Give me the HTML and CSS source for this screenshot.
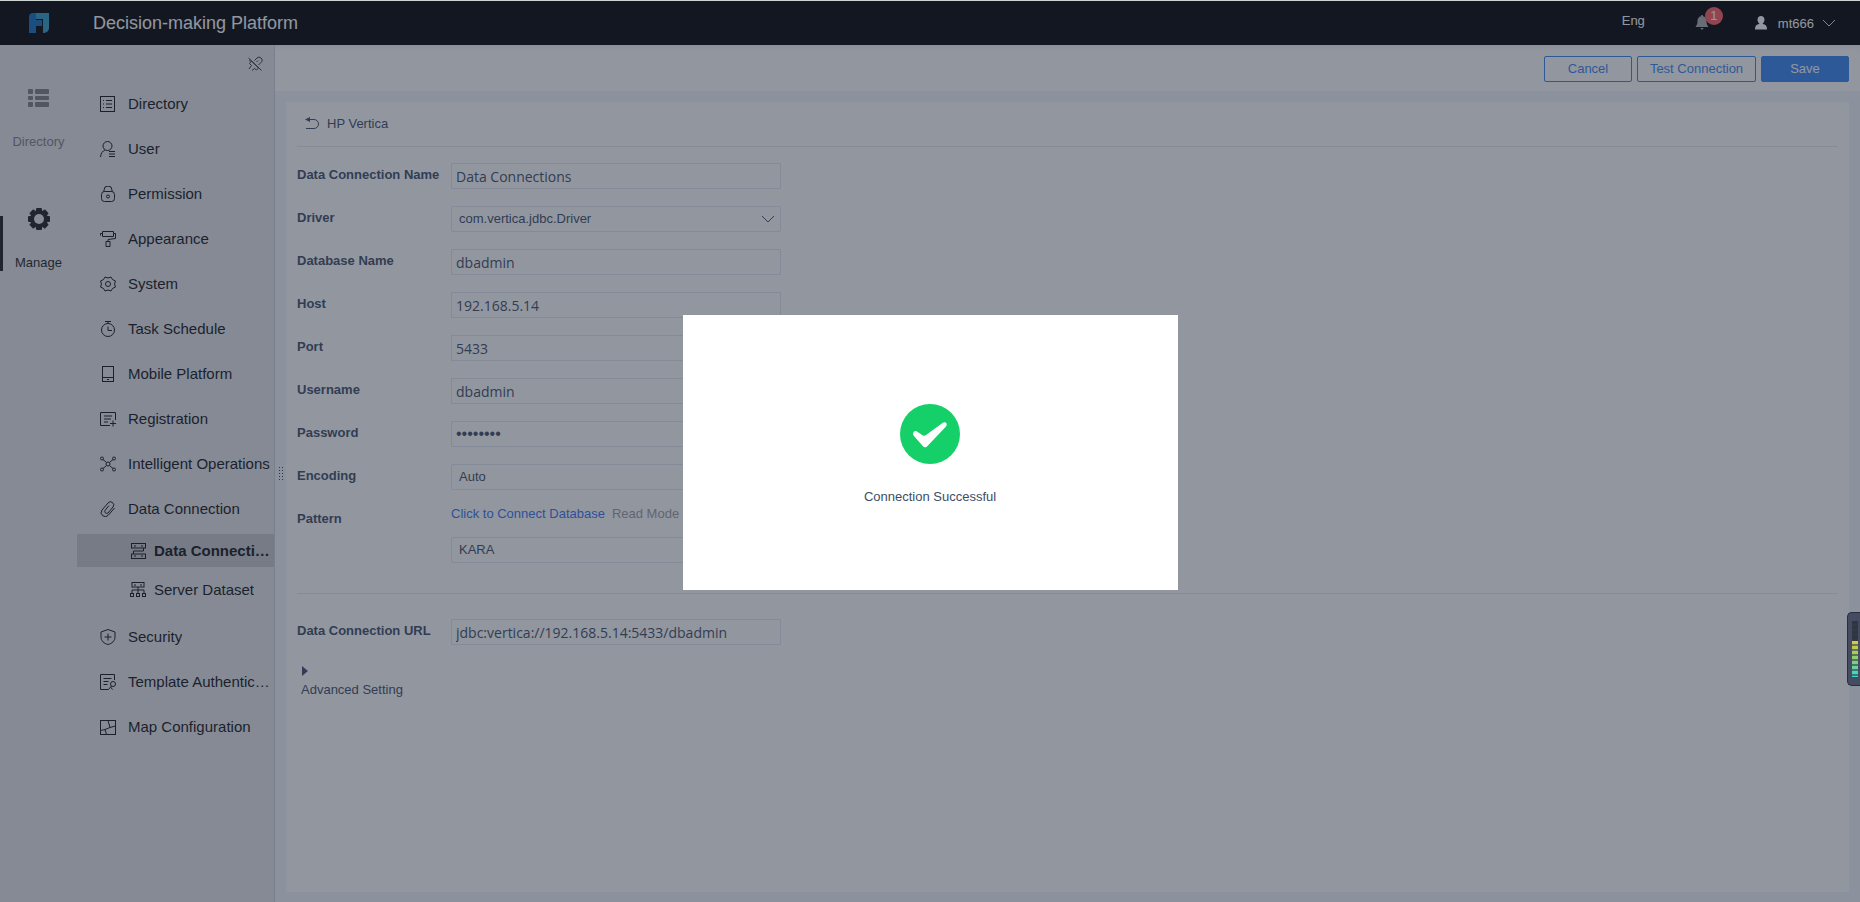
FILE: index.html
```html
<!DOCTYPE html>
<html lang="en">
<head>
    <meta charset="utf-8">
    <title>Decision-making Platform</title>
    <link rel="stylesheet" href="styles.css">
</head>
<body>
    <!-- Top bar -->
    <header class="header">
        <svg class="logo" viewBox="0 0 22 22">
            <path d="M5 1h3v7h6v6H8v7H1V5a4 4 0 0 1 4-4z" fill="#0f6fc0"/>
            <path d="M8 1h13v15a5 5 0 0 1-5 5h-1V7H8z" fill="#2f9cc8"/>
            <path d="M8 7h7v1H8zM8 14h7v1H8z" fill="#000"/>
        </svg>
        <span class="title">Decision-making Platform</span>
        <a class="lang" href="#">Eng</a>
        <button class="bell" aria-label="Messages">
            <svg width="14" height="15" viewBox="0 0 14 15"><path d="M7 0c.8 0 1 .6 1 1.200 2.400.5 3.500 2.300 3.500 4.800 0 3 .8 4.500 2 6H.5c1.200-1.500 2-3 2-6 0-2.500 1.100-4.300 3.500-4.800C6 .6 6.200 0 7 0zM5.500 13h3c-.2 1-.8 1.500-1.500 1.500S5.700 14 5.500 13z" fill="#a8aaae"/></svg>
            <span class="badge">1</span>
        </button>
        <button class="account">
            <svg width="14" height="14" viewBox="0 0 14 14"><path d="M7 0c2 0 3.500 1.600 3.500 3.700 0 1.500-.7 2.900-1.700 3.600v.8c2.800.6 4.200 2 4.200 4.900v.5H1V13c0-2.900 1.400-4.300 4.200-4.900v-.8C4.200 6.600 3.500 5.200 3.500 3.700 3.500 1.600 5 0 7 0z" fill="#fff"/></svg>
            <span>mt666</span>
            <svg width="14" height="8" viewBox="0 0 14 8"><path d="M1 1l6 6 6-6" fill="none" stroke="#ddd"/></svg>
        </button>
    </header>

    <div class="main">
        <!-- Left rail -->
        <nav class="rail">
            <a class="rail-item" href="#">
                <svg width="22" height="22" viewBox="0 0 22 22" fill="currentColor"><rect x="0" y="2" width="5" height="5" rx="1"/><rect x="7" y="2" width="14" height="5" rx="1"/><rect x="0" y="9" width="5" height="4" rx="1"/><rect x="7" y="9" width="14" height="4" rx="1"/><rect x="0" y="15" width="5" height="5" rx="1"/><rect x="7" y="15" width="14" height="5" rx="1"/></svg>
                <span>Directory</span>
            </a>
            <a class="rail-item active" href="#">
                <svg width="22" height="22" viewBox="0 0 22 22"><g fill="currentColor"><rect x="8" y="0" width="6" height="22" rx="1"/><rect x="8" y="0" width="6" height="22" rx="1" transform="rotate(45 11 11)"/><rect x="8" y="0" width="6" height="22" rx="1" transform="rotate(90 11 11)"/><rect x="8" y="0" width="6" height="22" rx="1" transform="rotate(135 11 11)"/><circle cx="11" cy="11" r="9"/></g><circle cx="11" cy="11" r="5" fill="#e5e7ea"/></svg>
                <span>Manage</span>
            </a>
        </nav>

        <!-- Manage menu -->
        <nav class="menu">
            <button class="pin" aria-label="Unpin menu">
                <svg width="16" height="16" viewBox="0 0 16 16" class="line"><path d="M1.500 2l13 12.500M7.500 4.500L10 2a2.800 2.800 0 0 1 4 0 2.800 2.800 0 0 1 0 4.500L11.500 9M4.500 5L2.500 7.500l2 2L2 13M4.500 5l7 7M5 14.500l2.500-2 2 1.500 2-2M3 3.500v2M9.500 6l1.500-1.500"/></svg>
            </button>
            <ul>
                <li><a class="menu-item" href="#"><svg viewBox="0 0 16 16" class="line"><rect x=".5" y=".5" width="14" height="15"/><path d="M3 4.500h1M6 4.500h6M3 8h1M6 8h6M3 11.500h1M6 11.500h6"/></svg><span>Directory</span></a></li>
                <li><a class="menu-item" href="#"><svg viewBox="0 0 16 16" class="line"><circle cx="7.500" cy="5" r="4.500"/><path d="M5 9C2.500 10 1 12 .5 16M9 10.500h6M9 13h6M9 15.500h6"/></svg><span>User</span></a></li>
                <li><a class="menu-item" href="#"><svg viewBox="0 0 16 16" class="line"><rect x="1.500" y="5.500" width="13" height="10" rx="3"/><path d="M4 6V4a4 4 0 0 1 8 0v2"/><circle cx="8" cy="10.500" r="1.500"/></svg><span>Permission</span></a></li>
                <li><a class="menu-item" href="#"><svg viewBox="0 0 16 16" class="line"><path d="M2.500.5h11v5h-11zM2.500 2.500H.5v2M13.500 2.500h2v5l-7.500 1v2M6 10.500h4v5H6z"/></svg><span>Appearance</span></a></li>
                <li><a class="menu-item" href="#"><svg viewBox="0 0 16 16" class="line"><path d="M5 1l3 1 3-1 1.500 2.500 3 1.500-1 3 1 3-3 1.500L11 15l-3-1-3 1-1.500-2.500-3-1.500 1-3-1-3 3-1.500z" stroke-linejoin="round"/><circle cx="8" cy="8" r="2.500"/></svg><span>System</span></a></li>
                <li><a class="menu-item" href="#"><svg viewBox="0 0 16 16" class="line"><circle cx="8" cy="9" r="6.500"/><path d="M5 .5h6M8 .5v2M8 5.500V9.500h4"/></svg><span>Task Schedule</span></a></li>
                <li><a class="menu-item" href="#"><svg viewBox="0 0 16 16" class="line"><rect x="2.500" y=".5" width="11" height="15"/><path d="M2.500 11.500h11M7 13.500h2"/></svg><span>Mobile Platform</span></a></li>
                <li><a class="menu-item" href="#"><svg viewBox="0 0 16 16" class="line"><path d="M15.500 9V1.500H.5v13H10M4 5h8M4 8h7M4 11h4M13 9.500v6M10 12.500h6"/></svg><span>Registration</span></a></li>
                <li><a class="menu-item" href="#"><svg viewBox="0 0 16 16" class="line"><circle cx="2" cy="2.500" r="1.500"/><circle cx="14" cy="2.500" r="1.500"/><circle cx="2" cy="13.500" r="1.500"/><circle cx="14" cy="13.500" r="1.500"/><circle cx="8" cy="8" r="2"/><path d="M3 3.500l3.500 3M13 3.500l-3.500 3M3 12.500l3.500-3M13 12.500l-3.500-3"/></svg><span>Intelligent Operations</span></a></li>
                <li>
                    <a class="menu-item" href="#"><svg viewBox="0 0 16 16" class="line"><path d="M14.500 7l-6 7a4 4 0 0 1-6.500-5l6-7a3.200 3.200 0 0 1 5 4l-5 6a2 2 0 0 1-3-2.500l4-5"/></svg><span>Data Connection</span></a>
                    <ul class="submenu">
                        <li><a class="menu-item sub selected" href="#"><svg viewBox="0 0 16 16" class="line"><rect x="1.500" y=".5" width="14" height="4.500"/><rect x="1.500" y="11" width="14" height="4.500"/><path d="M13.500 5v3h-10v3M4 3h2M11 3h2M4 13h2M11 13h2"/></svg><span>Data Connections</span></a></li>
                        <li><a class="menu-item sub" href="#"><svg viewBox="0 0 16 16" class="line"><rect x="2" y=".5" width="12" height="4.500"/><path d="M4 3h2M10 3h2M8 5v6M2 11V8h12v3"/><rect x=".5" y="11.500" width="3" height="3"/><rect x="6.500" y="11.500" width="3" height="3"/><rect x="12.500" y="11.500" width="3" height="3"/></svg><span>Server Dataset</span></a></li>
                    </ul>
                </li>
                <li><a class="menu-item" href="#"><svg viewBox="0 0 16 16" class="line"><path d="M8 .5l7 2.500v5c0 4-3 6.500-7 7.500C4 14.500 1 12 1 8V3zM8 4.500v7M4.500 8h7"/></svg><span>Security</span></a></li>
                <li><a class="menu-item" href="#"><svg viewBox="0 0 16 16" class="line"><path d="M14.500 6V.5H.5v15h8M3.500 4.500h8M3.500 7.500h5M3.500 10.500h4"/><circle cx="13" cy="10" r="2.500"/><path d="M11.500 12L8.500 15.500M10.500 13l2 2.500"/></svg><span>Template Authentication</span></a></li>
                <li><a class="menu-item" href="#"><svg viewBox="0 0 16 16" class="line"><rect x=".5" y="1.500" width="15" height="14"/><path d="M.5 11.500l4.500-1 5-2 5.500-1.500M10 8.500L8 1.500M5 10.500l1.500 5"/></svg><span>Map Configuration</span></a></li>
            </ul>
        </nav>

        <!-- Collapse handle -->
        <div class="handle"><i></i></div>

        <!-- Content -->
        <main class="content">
            <div class="toolbar">
                <button class="button">Cancel</button>
                <button class="button wide">Test Connection</button>
                <button class="button primary">Save</button>
            </div>

            <form class="card">
                <div class="card-title">
                    <svg width="16" height="14" viewBox="0 0 16 14"><path d="M3 3.500h7a4 4 0 0 1 0 9H2" fill="none" stroke="currentColor"/><path d="M1 3.500L6 1v5z" fill="currentColor"/></svg>
                    <span>HP Vertica</span>
                </div>

                <div class="rows">
                    <div class="row">
                        <label for="name">Data Connection Name</label>
                        <input type="text" id="name" value="Data Connections">
                    </div>
                    <div class="row">
                        <label for="driver">Driver</label>
                        <div class="select">
                            <select id="driver"><option>com.vertica.jdbc.Driver</option></select>
                            <svg width="14" height="8" viewBox="0 0 14 8"><path d="M1 1l6 6 6-6" fill="none" stroke="currentColor"/></svg>
                        </div>
                    </div>
                    <div class="row">
                        <label for="database">Database Name</label>
                        <input type="text" id="database" value="dbadmin">
                    </div>
                    <div class="row">
                        <label for="host">Host</label>
                        <input type="text" id="host" value="192.168.5.14">
                    </div>
                    <div class="row">
                        <label for="port">Port</label>
                        <input type="text" id="port" value="5433">
                    </div>
                    <div class="row">
                        <label for="username">Username</label>
                        <input type="text" id="username" value="dbadmin">
                    </div>
                    <div class="row">
                        <label for="password">Password</label>
                        <input type="password" id="password" value="12345678">
                    </div>
                    <div class="row">
                        <label for="encoding">Encoding</label>
                        <div class="select">
                            <select id="encoding"><option>Auto</option></select>
                            <svg width="14" height="8" viewBox="0 0 14 8"><path d="M1 1l6 6 6-6" fill="none" stroke="currentColor"/></svg>
                        </div>
                    </div>
                    <div class="row">
                        <label for="pattern">Pattern</label>
                        <div class="pattern">
                            <div class="hint"><a href="#">Click to Connect Database</a><span>Read Mode</span></div>
                            <div class="select">
                                <select id="pattern"><option>KARA</option></select>
                                <svg width="14" height="8" viewBox="0 0 14 8"><path d="M1 1l6 6 6-6" fill="none" stroke="currentColor"/></svg>
                            </div>
                        </div>
                    </div>
                </div>

                <div class="rows url">
                    <div class="row">
                        <label for="url">Data Connection URL</label>
                        <input type="text" id="url" value="jdbc:vertica://192.168.5.14:5433/dbadmin">
                    </div>
                </div>

                <button type="button" class="advanced">
                    <svg width="8" height="10" viewBox="0 0 8 10"><path d="M1 0l6 5-6 5z" fill="currentColor"/></svg>
                    <span>Advanced Setting</span>
                </button>
            </form>
        </main>
    </div>

    <!-- Result dialog -->
    <div class="mask">
        <div class="dialog" role="dialog" aria-label="Connection result">
            <svg width="60" height="60" viewBox="0 0 60 60"><circle cx="30" cy="30" r="30" fill="#15d068"/><path d="M13.500 31.500c-1.500-2.500 1-5.500 3.500-4l5.500 3.800c1.200.8 2.200.7 3.500-.3l16.500-12c3-2 5.500 1 3.500 3.500L27 42.500c-1.500 1.300-3 1-4-.2z" fill="#fff"/></svg>
            <p>Connection Successful</p>
        </div>
    </div>

    <!-- Level meter at the window edge -->
    <div class="meter"><i></i></div>
</body>
</html>
```
FILE: styles.css
```css
* {
    box-sizing: border-box;
}

body {
    display: flex;
    flex-direction: column;
    min-height: 100vh;
    margin: 0;
    font-family: "Liberation Sans", Arial, sans-serif;
    font-size: 13px;
    color: #3d4d66;
    background-color: #f1f6fa;
}

a {
    color: inherit;
    text-decoration: none;
}

ul {
    list-style: none;
    margin: 0;
    padding: 0;
}

button,
input,
select {
    font: inherit;
    color: inherit;
}

button {
    padding: 0;
    border: none;
    background: none;
    cursor: pointer;
}

.line {
    fill: none;
    stroke: currentColor;
    stroke-width: 1;
}

/* Header */
.header {
    display: flex;
    align-items: center;
    height: 45px;
    padding: 0 24px 0 28px;
    border-top: 1px solid #cdd3d1;
    background-color: #000103;
    color: #fff;
}

.logo {
    width: 22px;
    height: 22px;
    margin-right: 43px;
}

.title {
    flex: 1;
    font-size: 18px;
}

.lang {
    margin: 0 50px 6px 0;
}

.bell {
    position: relative;
    height: 16px;
    margin-right: 45px;
}

.badge {
    position: absolute;
    top: -8px;
    left: 10px;
    width: 18px;
    height: 18px;
    border-radius: 9px;
    line-height: 18px;
    background-color: #ff5c60;
}

.account {
    display: flex;
    align-items: center;
}

.account span {
    margin: 0 8px 0 10px;
}

/* Layout */
.main {
    flex: 1;
    display: flex;
}

/* Rail */
.rail {
    width: 77px;
    padding-top: 42px;
    background-color: #e5e7ea;
}

.rail-item {
    position: relative;
    display: flex;
    flex-direction: column;
    align-items: center;
    height: 121px;
    color: #7d7f84;
}

.rail-item span {
    margin-top: 25px;
}

.rail-item.active {
    color: #1a1c20;
}

.rail-item.active::before {
    content: "";
    position: absolute;
    top: 8px;
    left: 0;
    width: 3px;
    height: 55px;
    background-color: #1a1c20;
}

/* Menu */
.menu {
    width: 198px;
    border-right: 1px solid #cdd1d8;
    background-color: #e5e7ea;
    color: #101216;
}

.pin {
    display: block;
    height: 36px;
    margin-left: auto;
    padding-top: 4px;
    margin-right: 11px;
    color: #333;
}

.menu-item {
    display: flex;
    align-items: center;
    height: 45px;
    padding-left: 23px;
    font-size: 15px;
}

.menu-item svg {
    flex: none;
    width: 16px;
    height: 16px;
    margin-right: 12px;
}

.menu-item span {
    overflow: hidden;
    line-height: 20px;
    text-overflow: ellipsis;
    white-space: nowrap;
}

.submenu {
    display: flex;
    flex-direction: column;
    gap: 6px;
    padding: 3px 0 8px;
}

.menu-item.sub {
    height: 33px;
    padding-left: 53px;
}

.menu-item.sub svg {
    margin-right: 8px;
}

.menu-item.selected {
    background-color: #c6c8cc;
    font-weight: bold;
}

/* Collapse handle */
.handle {
    display: flex;
    align-items: center;
    justify-content: center;
    width: 11px;
}

.handle i {
    width: 4px;
    height: 13px;
    background-image: conic-gradient(from 270deg at 1px 1px, #333c50 90deg, transparent 0);
    background-size: 3px 3px;
}

/* Content */
.content {
    flex: 1;
    display: flex;
    flex-direction: column;
}

.toolbar {
    display: flex;
    gap: 5px;
    justify-content: flex-end;
    height: 46px;
    margin-left: -11px;
    padding: 11px 11px 0;
    background-color: #fff;
    box-shadow: inset 0 6px 6px -4px #e9ebef;
}

.button {
    width: 88px;
    height: 26px;
    padding-bottom: 2px;
    border: 1px solid #3685f2;
    border-radius: 2px;
    color: #3685f2;
}

.button.wide {
    width: 119px;
}

.button.primary {
    background-color: #3685f2;
    color: #fff;
}

.card {
    flex: 1;
    margin: 11px 11px 10px 0;
    padding: 0 11px;
    background-color: #fff;
}

.card-title {
    display: flex;
    align-items: center;
    gap: 7px;
    height: 45px;
    padding: 0 0 2px 7px;
    border-bottom: 1px solid #e6e8ee;
}

/* Form rows */
.rows {
    display: flex;
    flex-direction: column;
    gap: 17px;
    padding: 16px 0 30px;
    border-bottom: 1px solid #e6e8ee;
}

.rows.url {
    padding: 25px 0 21px;
    border-bottom: none;
}

.row {
    display: flex;
    align-items: flex-start;
}

.row label {
    width: 154px;
    font-weight: bold;
    line-height: 24px;
}

.row input,
.select {
    width: 330px;
    height: 26px;
    border: 1px solid #e3e6ee;
    background-color: #fff;
}

.row input {
    padding: 0 4px;
    font-family: "Open Sans", "Noto Sans", sans-serif;
    font-size: 14px;
}

.row input[type="password"] {
    font-family: "Liberation Sans", Arial, sans-serif;
    font-size: 16px;
}

.select {
    display: flex;
    align-items: center;
    padding-right: 5px;
    border-radius: 2px;
}

.select select {
    flex: 1;
    height: 24px;
    padding: 0 7px 2px;
    border: none;
    appearance: none;
    background: none;
}

.hint {
    display: flex;
    gap: 7px;
    margin-bottom: 16px;
    line-height: 14px;
    color: #9a9ca4;
}

.hint a {
    color: #3672f2;
}

.advanced {
    display: flex;
    flex-direction: column;
    align-items: flex-start;
    gap: 6px;
    margin-left: 4px;
}

/* Dialog */
.mask {
    position: fixed;
    top: 1px;
    right: 0;
    bottom: 0;
    left: 0;
    display: flex;
    align-items: center;
    justify-content: center;
    padding-top: 2px;
    background-color: rgba(37, 45, 63, 0.5);
}

.dialog {
    display: flex;
    flex-direction: column;
    align-items: center;
    width: 495px;
    height: 275px;
    padding-top: 89px;
    background-color: #fff;
}

.dialog p {
    margin: 25px 0 0;
}

/* Meter */
.meter {
    position: fixed;
    top: 612px;
    right: 0;
    width: 13px;
    height: 74px;
    padding: 8px 2px 8px 4px;
    border: 1px solid #2a2e3a;
    border-right: none;
    border-radius: 5px 0 0 5px;
    background-color: #454b60;
}

.meter i {
    display: block;
    height: 56px;
    background-image: repeating-linear-gradient(transparent 0 3px, rgba(52, 58, 74, 0.6) 3px 5px), linear-gradient(#31353f 0 20px, #d8c840 20px, #a0cc60 60%, #38d8c8);
}
```
